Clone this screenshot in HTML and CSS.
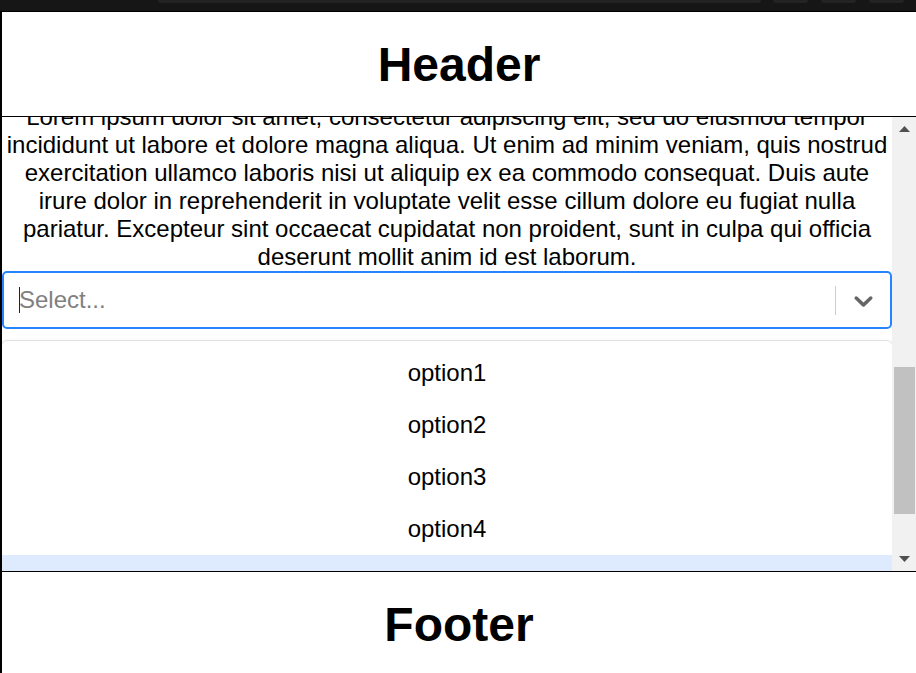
FILE: index.html
```html
<!DOCTYPE html>
<html lang="en">
<head>
<meta charset="utf-8">
<title>Select demo</title>
<link rel="stylesheet" href="styles.css">
</head>
<body>
<div class="chrome">
  <span class="pill pill-wide"></span>
  <span class="pill"></span>
  <span class="pill"></span>
  <span class="pill"></span>
</div>
<div class="frame">
  <header class="header"><h1 class="title">Header</h1></header>
  <div class="viewport">
    <main class="scroll" id="scroll">
      <div class="content">
        <p class="para">Lorem ipsum dolor sit amet, consectetur adipiscing elit, sed do eiusmod tempor incididunt ut labore et dolore magna aliqua. Ut enim ad minim veniam, quis nostrud exercitation ullamco laboris nisi ut aliquip ex ea commodo consequat. Duis aute irure dolor in reprehenderit in voluptate velit esse cillum dolore eu fugiat nulla pariatur. Excepteur sint occaecat cupidatat non proident, sunt in culpa qui officia deserunt mollit anim id est laborum.</p>
        <p class="para">Lorem ipsum dolor sit amet, consectetur adipiscing elit, sed do eiusmod tempor incididunt ut labore et dolore magna aliqua. Ut enim ad minim veniam, quis nostrud exercitation ullamco laboris nisi ut aliquip ex ea commodo consequat. Duis aute irure dolor in reprehenderit in voluptate velit esse cillum dolore eu fugiat nulla pariatur. Excepteur sint occaecat cupidatat non proident, sunt in culpa qui officia deserunt mollit anim id est laborum.</p>
        <p class="para">Lorem ipsum dolor sit amet, consectetur adipiscing elit, sed do eiusmod tempor incididunt ut labore et dolore magna aliqua. Ut enim ad minim veniam, quis nostrud exercitation ullamco laboris nisi ut aliquip ex ea commodo consequat. Duis aute irure dolor in reprehenderit in voluptate velit esse cillum dolore eu fugiat nulla pariatur. Excepteur sint occaecat cupidatat non proident, sunt in culpa qui officia deserunt mollit anim id est laborum.</p>
        <p class="para">Lorem ipsum dolor sit amet, consectetur adipiscing elit, sed do eiusmod tempor incididunt ut labore et dolore magna aliqua. Ut enim ad minim veniam, quis nostrud exercitation ullamco laboris nisi ut aliquip ex ea commodo consequat. Duis aute irure dolor in reprehenderit in voluptate velit esse cillum dolore eu fugiat nulla pariatur. Excepteur sint occaecat cupidatat non proident, sunt in culpa qui officia deserunt mollit anim id est laborum.</p>
        <p class="para">Lorem ipsum dolor sit amet, consectetur adipiscing elit, sed do eiusmod tempor incididunt ut labore et dolore magna aliqua. Ut enim ad minim veniam, quis nostrud exercitation ullamco laboris nisi ut aliquip ex ea commodo consequat. Duis aute irure dolor in reprehenderit in voluptate velit esse cillum dolore eu fugiat nulla pariatur. Excepteur sint occaecat cupidatat non proident, sunt in culpa qui officia deserunt mollit anim id est laborum.</p>
        <div class="select">
          <div class="control">
            <div class="value"><span class="caret"></span><span class="placeholder">Select...</span></div>
            <span class="separator"></span>
            <div class="indicator">
              <svg class="chevron" viewBox="0 0 20 20" width="31" height="31" aria-hidden="true"><path d="M4.516 7.548c0.436-0.446 1.043-0.481 1.576 0l3.908 3.747 3.908-3.747c0.533-0.481 1.141-0.446 1.574 0 0.436 0.445 0.408 1.197 0 1.615-0.406 0.418-4.695 4.502-4.695 4.502-0.217 0.223-0.502 0.335-0.787 0.335s-0.57-0.112-0.789-0.335c0 0-4.287-4.084-4.695-4.502s-0.436-1.17 0-1.615z"/></svg>
            </div>
          </div>
          <div class="menu">
            <div class="option">option1</div>
            <div class="option">option2</div>
            <div class="option">option3</div>
            <div class="option">option4</div>
            <div class="option option-focused">option5</div>
            <div class="option">option6</div>
          </div>
        </div>
      </div>
    </main>
    <div class="scrollbar" aria-hidden="true">
      <div class="sb-button">
        <svg width="11" height="6" viewBox="0 0 11 6"><path d="M5.5 0L11 6H0z"/></svg>
      </div>
      <div class="sb-track" id="track">
        <div class="sb-thumb" id="thumb"></div>
      </div>
      <div class="sb-button">
        <svg width="11" height="6" viewBox="0 0 11 6"><path d="M0 0H11L5.5 6z"/></svg>
      </div>
    </div>
  </div>
  <footer class="footer"><h2 class="title">Footer</h2></footer>
</div>
<script src="script.js"></script>
</body>
</html>
```

FILE: styles.css
```css
html {
  overflow: hidden;
}
body {
  margin: 0;
  background: #161616;
  font-family: "Liberation Sans", Arial, sans-serif;
  color: #000;
}
.chrome {
  height: 11px;
  display: flex;
  align-items: flex-start;
  gap: 13px;
  padding-left: 158px;
  box-sizing: border-box;
}
.pill {
  width: 35px;
  height: 3px;
  background: #232323;
  border-radius: 0 0 4px 4px;
}
.pill-wide {
  width: 603px;
  margin-right: -1px;
}
.frame {
  display: flex;
  flex-direction: column;
  background: #fff;
  border-left: 2px solid #000;
  border-top: 1px solid #000;
}
.header {
  height: 104px;
  border-bottom: 1px solid #000;
  display: flex;
  align-items: center;
  justify-content: center;
}
.footer {
  height: 105px;
  border-top: 1px solid #000;
  display: flex;
  align-items: center;
  justify-content: center;
}
.title {
  margin: 0;
  font-size: 48px;
  font-weight: bold;
  line-height: 55px;
}
.viewport {
  height: 454px;
  display: flex;
}
.scroll {
  flex: 1;
  min-width: 0;
  overflow: hidden;
}
.scrollbar {
  width: 24px;
  flex: none;
  background: #f1f1f1;
  display: flex;
  flex-direction: column;
}
.sb-button {
  height: 24px;
  display: flex;
  align-items: center;
  justify-content: center;
}
.sb-button svg {
  display: block;
  fill: #505050;
}
.sb-track {
  flex: 1;
}
.sb-thumb {
  margin-top: 225px;
  height: 149px;
  margin-left: 2px;
  margin-right: 1px;
  background: #c1c1c1;
}
.content {
  padding-top: 13px;
}
.para {
  margin: 0;
  font-size: 24px;
  text-align: center;
}
.select {
  font-size: 24px;
  padding-bottom: 8px;
}
.control {
  height: 58px;
  box-sizing: border-box;
  border: 2px solid #2684ff;
  border-radius: 5px;
  display: flex;
  align-items: center;
  background: #fff;
}
.value {
  flex: 1;
  display: flex;
  align-items: center;
  padding-left: 15px;
}
.caret {
  width: 1px;
  height: 26px;
  background: #222;
  margin-right: -1px;
}
.placeholder {
  color: #808080;
}
.separator {
  width: 1px;
  height: 29px;
  background: #cccccc;
}
.indicator {
  width: 54px;
  display: flex;
  align-items: center;
  justify-content: center;
}
.chevron {
  fill: #666;
  display: block;
}
.menu {
  margin-top: 12px;
  padding: 6px 0;
  border-radius: 5px;
  box-shadow: 0 0 0 1px rgba(0, 0, 0, 0.1), 0 4px 11px rgba(0, 0, 0, 0.1);
  background: #fff;
}
.option {
  height: 52px;
  display: flex;
  align-items: center;
  justify-content: center;
}
.option-focused {
  background: #deebff;
}
```

FILE: script.js
```js
(function () {
  var scroll = document.getElementById('scroll');
  var control = scroll.querySelector('.control');
  var track = document.getElementById('track');
  var thumb = document.getElementById('thumb');
  function place() {
    var offset = control.getBoundingClientRect().top - scroll.getBoundingClientRect().top;
    scroll.scrollTop += offset - 154;
    var total = scroll.scrollHeight;
    var view = scroll.clientHeight;
    var len = track.clientHeight;
    thumb.style.height = Math.round(view / total * len) + 'px';
    thumb.style.marginTop = Math.round(scroll.scrollTop / total * len) + 'px';
  }
  place();
  window.addEventListener('load', place);
})();
```
